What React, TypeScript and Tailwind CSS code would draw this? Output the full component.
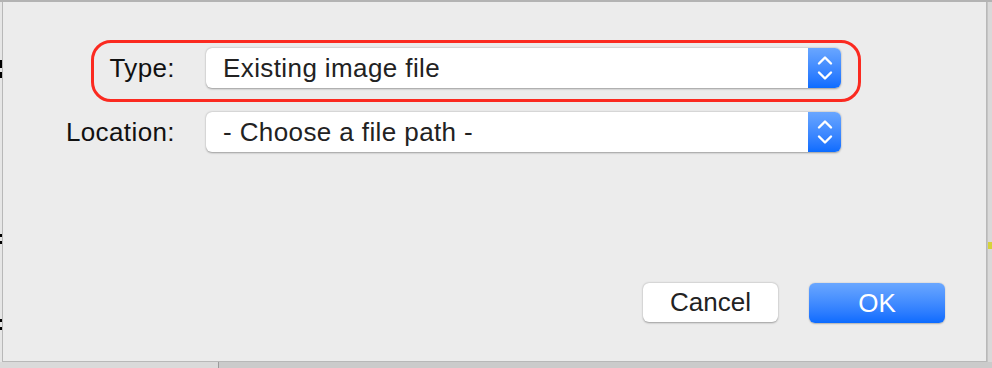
import React from "react";

function Chevrons() {
  return (
    <svg width="16" height="26" viewBox="0 0 16 26" fill="none">
      <path d="M2 8.5 L8 2.5 L14 8.5" stroke="white" strokeWidth="2.4" strokeLinecap="round" strokeLinejoin="round" />
      <path d="M2 17.5 L8 23.5 L14 17.5" stroke="white" strokeWidth="2.4" strokeLinecap="round" strokeLinejoin="round" />
    </svg>
  );
}

function Select({ value }: { value: string }) {
  return (
    <div className="flex h-[40px] w-[635px] rounded-[6px] bg-white shadow-[0_0.5px_2px_rgba(0,0,0,0.35)] overflow-hidden">
      <div className="flex flex-1 items-center pl-[17px] text-[26px] text-[#222222] tracking-[0.4px]">{value}</div>
      <div className="flex w-[33px] items-center justify-center bg-gradient-to-b from-[#69a6ff] to-[#0b6cff]">
        <Chevrons />
      </div>
    </div>
  );
}

export default function App() {
  return (
    <div
      className="flex h-[368px] w-[992px] flex-col overflow-hidden bg-[#d6d6d6]"
      style={{ fontFamily: '"Liberation Sans", Arial, sans-serif' }}
    >
      <div className="h-[2px] w-full bg-[#b3b3b3]" />
      <div className="flex h-[360px] w-full">
        <div className="relative flex w-[2px] flex-col bg-[#e6e6e6]">
          <div className="mt-[58px] h-[8px] w-[2px] bg-black" />
          <div className="mt-[4px] h-[6px] w-[2px] bg-black" />
          <div className="mt-[156px] h-[3px] w-[2px] bg-black" />
          <div className="mt-[4px] h-[3px] w-[2px] bg-black" />
          <div className="mt-[75px] h-[3px] w-[2px] bg-black" />
          <div className="mt-[5px] h-[3px] w-[2px] bg-black" />
        </div>
        <div className="relative flex w-[985px] flex-col border-l border-r border-b border-[#b8b8b8] bg-[#ececec]">
          <div className="absolute left-[88px] top-[38px] h-[62px] w-[770px] rounded-[20px] border-[3px] border-[#fb2a20]" />
          <div className="mt-[46px] flex flex-col gap-[24px]">
            <div className="flex items-center">
              <div className="w-[172px] text-right text-[26px] text-[#111111] tracking-[0.4px]">Type:</div>
              <div className="ml-[31px]">
                <Select value="Existing image file" />
              </div>
            </div>
            <div className="flex items-center">
              <div className="w-[172px] text-right text-[26px] text-[#111111] tracking-[0.4px]">Location:</div>
              <div className="ml-[31px]">
                <Select value="- Choose a file path -" />
              </div>
            </div>
          </div>
          <div className="mt-auto mb-[38px] mr-[41px] flex justify-end gap-[31px]">
            <button className="flex h-[39px] w-[135px] items-center justify-center rounded-[6px] bg-white text-[26px] text-[#222222] shadow-[0_0.5px_2px_rgba(0,0,0,0.35)]">
              Cancel
            </button>
            <button className="flex h-[40px] w-[136px] items-center justify-center rounded-[6px] bg-gradient-to-b from-[#6aa7ff] to-[#0a6bff] text-[26px] text-white shadow-[0_0.5px_1.5px_rgba(0,0,0,0.25)]">
              OK
            </button>
          </div>
        </div>
        <div className="flex flex-1 flex-col border-l border-[#c4c4c4] bg-[#d9d9d9]">
          <div className="mt-[240px] h-[7px] w-full bg-[#d6d33a]" />
        </div>
      </div>
      <div className="flex flex-1">
        <div className="w-[218px] bg-[#dadada]" />
        <div className="flex-1 border-l border-[#9a9a9a] bg-[#cbcbcb]" />
      </div>
    </div>
  );
}
